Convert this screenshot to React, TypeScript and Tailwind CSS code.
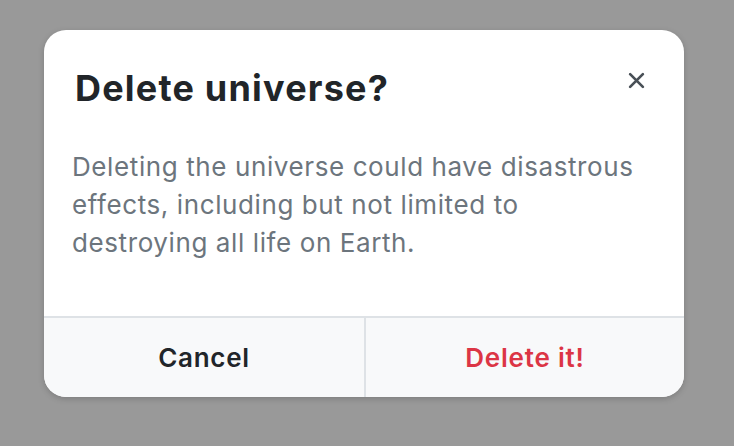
import React from "react";

export default function App() {
  return (
    <div
      className="w-[734px] h-[446px] bg-[#999999] pt-[30px] pl-[44px]"
      style={{ fontFamily: "Inter, 'Noto Sans', 'Liberation Sans', sans-serif" }}
    >
      <div className="w-[640px] h-[367px] bg-white rounded-[22px] overflow-hidden shadow-[0_2px_6px_rgba(0,0,0,0.18)] flex flex-col">
        <div className="flex items-start justify-between pt-[36px] pl-[31px] pr-[38px]">
          <h1 className="text-[36px] leading-[44px] font-bold text-[#212529] tracking-[1.2px]">
            Delete universe?
          </h1>
          <button className="mt-[4px] w-[20px] h-[20px] flex items-center justify-center text-[#495057]">
            <svg width="17" height="17" viewBox="0 0 16 16" fill="none" stroke="currentColor" strokeWidth="2.5" strokeLinecap="round">
              <path d="M2 2 L14 14 M14 2 L2 14" />
            </svg>
          </button>
        </div>
        <p className="mt-[38px] pl-[28px] pr-[44px] text-[26px] leading-[38px] text-[#6c757d] tracking-[0.6px]">
          Deleting the universe could have disastrous effects, including but not limited to destroying all life on Earth.
        </p>
        <div className="mt-auto h-[81px] border-t-2 border-[#dee2e6] bg-[#f8f9fa] grid grid-cols-2">
          <button className="flex items-center justify-center text-[26px] font-semibold text-[#212529] tracking-[0.7px]">
            Cancel
          </button>
          <button className="flex items-center justify-center text-[26px] font-semibold text-[#dc3545] border-l-2 border-[#dee2e6] tracking-[0.8px]">
            Delete it!
          </button>
        </div>
      </div>
    </div>
  );
}
